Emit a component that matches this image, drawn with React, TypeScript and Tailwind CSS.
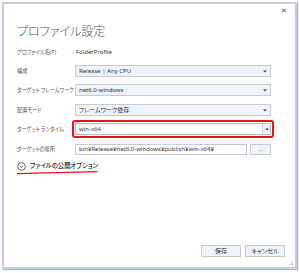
import React from "react";

const font = "[font-family:'Noto_Sans','Noto_Sans_CJK_JP',sans-serif] [font-feature-settings:'palt']";

function Arrow() {
  return (
    <svg width="4" height="3" viewBox="0 0 4 3" className="shrink-0">
      <path d="M0 0.5 L4 0.5 L2 2.5 Z" fill="#444" />
    </svg>
  );
}

function Combo({ text }: { text: string }) {
  return (
    <div className="flex items-center justify-between w-[196px] h-[12px] border border-[#c5ccd8] bg-[#eef2f9] pl-[3px] pr-[3px]">
      <span className="text-[6px] leading-none text-[#333]">{text}</span>
      <Arrow />
    </div>
  );
}

function Label({ text }: { text: string }) {
  return (
    <div className="flex items-center w-[58px] h-full shrink-0 leading-none">
      <span className="block origin-left scale-x-[0.86] text-[6px] leading-none text-[#555] whitespace-nowrap">{text}</span>
    </div>
  );
}

function Row({ label, children, mt }: { label: string; children: React.ReactNode; mt: string }) {
  return (
    <div className={`flex items-center h-[12px] ${mt}`}>
      <Label text={label} />
      {children}
    </div>
  );
}

export default function App() {
  return (
    <div className={`w-[300px] h-[273px] bg-white pt-[2px] pl-[2px] ${font}`}>
      <div className="relative w-[295px] h-[267px] border-2 border-[#c4cfdf] shadow-[1px_1px_1px_rgba(80,90,110,0.45)] bg-white flex flex-col pl-[13px]">
        <div className="flex justify-end h-[12px] pr-[8px] pt-[3px]">
          <span className="text-[7px] leading-none text-[#555]">✕</span>
        </div>
        <div className="mt-[8px] text-[12px] leading-[16px] font-light text-[#555] whitespace-nowrap">プロファイル設定</div>
        <div className="flex items-center h-[10px] mt-[7px]">
          <Label text="プロファイル名(P)" />
          <span className="text-[6px] leading-none text-[#333] pl-[1px]">FolderProfile</span>
        </div>
        <Row label="構成" mt="mt-[8px]">
          <Combo text="Release | Any CPU" />
        </Row>
        <Row label="ターゲット フレームワーク" mt="mt-[7px]">
          <Combo text="net6.0-windows" />
        </Row>
        <Row label="配置モード" mt="mt-[8px]">
          <Combo text="フレームワーク依存" />
        </Row>
        <Row label="ターゲット ランタイム" mt="mt-[7px]">
          <div className="relative">
            <div className="flex items-center w-[196px] h-[12px] border border-[#b8bfcc] bg-white">
              <span className="flex-1 pl-[3px] text-[6px] leading-none text-[#333]">win-x64</span>
              <div className="flex items-center justify-center w-[8px] h-full border-l border-[#c5ccd8] bg-[#eef2f9]">
                <Arrow />
              </div>
            </div>
            <div className="absolute -left-[3px] -top-[3px] -right-[3px] -bottom-[3px] border-2 border-[#e8141c] rounded-[3px]" />
          </div>
        </Row>
        <Row label="ターゲットの場所" mt="mt-[8px]">
          <div className="flex items-center gap-[3px]">
            <div className="flex items-center w-[172px] h-[11px] border border-[#c5ccd8] bg-white pl-[3px]">
              <span className="text-[6px] leading-none text-[#333] whitespace-nowrap">bin¥Release¥net6.0-windows¥publish¥win-x64¥</span>
            </div>
            <div className="flex items-center justify-center w-[21px] h-[11px] border border-[#c5ccd8] bg-[#eef2f9]">
              <span className="text-[5px] leading-none text-[#555]">...</span>
            </div>
          </div>
        </Row>
        <div className="relative flex items-center h-[10px] mt-[6px] gap-[4px]">
          <svg width="9" height="9" viewBox="0 0 9 9" className="shrink-0">
            <circle cx="4.5" cy="4.5" r="3.8" fill="none" stroke="#444" strokeWidth="0.8" />
            <path d="M2.8 3.8 L4.5 5.4 L6.2 3.8" fill="none" stroke="#444" strokeWidth="0.9" />
          </svg>
          <span className="text-[6.3px] leading-none text-[#222] font-medium whitespace-nowrap">ファイルの公開オプション</span>
          <svg width="82" height="5" viewBox="0 0 82 5" className="absolute left-0 top-[9px]">
            <path d="M0.5 3.6 Q40 2.4 80 1.6" fill="none" stroke="#e8141c" strokeWidth="1.4" strokeLinecap="round" />
          </svg>
        </div>
        <div className="flex-1" />
        <div className="flex justify-end gap-[4px] pr-[10px] mb-[10px]">
          <div className="flex items-center justify-center w-[40px] h-[12px] border border-[#c5ccd8] bg-[#eef2f9]">
            <span className="text-[6px] leading-none text-[#333]">保存</span>
          </div>
          <div className="flex items-center justify-center w-[40px] h-[12px] border border-[#c5ccd8] bg-[#eef2f9]">
            <span className="text-[6px] leading-none text-[#333]">キャンセル</span>
          </div>
        </div>
        <svg width="5" height="5" viewBox="0 0 5 5" className="absolute right-[1px] bottom-[1px]">
          <rect x="3" y="0" width="1" height="1" fill="#b0b8c4" />
          <rect x="1.5" y="1.5" width="1" height="1" fill="#b0b8c4" />
          <rect x="3" y="1.5" width="1" height="1" fill="#b0b8c4" />
          <rect x="0" y="3" width="1" height="1" fill="#b0b8c4" />
          <rect x="1.5" y="3" width="1" height="1" fill="#b0b8c4" />
          <rect x="3" y="3" width="1" height="1" fill="#b0b8c4" />
        </svg>
      </div>
    </div>
  );
}
